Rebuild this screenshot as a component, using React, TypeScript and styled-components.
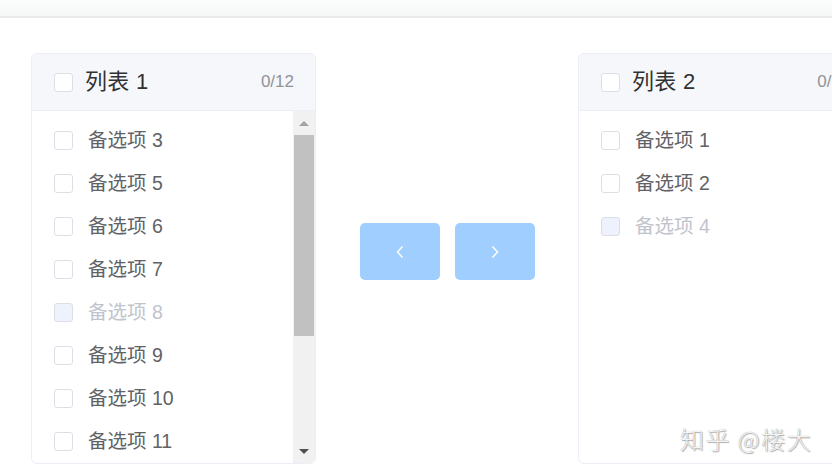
import React from "react";
import styled, { createGlobalStyle } from "styled-components";

const Global = createGlobalStyle`
  html, body { margin: 0; padding: 0; background: #fff; }
  body {
    width: 832px; height: 472px; overflow: hidden;
    font-family: "Liberation Sans", "Noto Sans CJK SC", sans-serif;
  }
`;

const Page = styled.div`
  position: relative;
  width: 832px;
  height: 472px;
  overflow: hidden;
  background: #fff;
`;

const TopBand = styled.div`
  height: 16px;
  background: linear-gradient(#fbfcfc, #f6f7f7);
  border-bottom: 2px solid #e7e9ea;
`;

const Transfer = styled.div`
  display: flex;
  align-items: flex-start;
  padding: 35px 0 0 31px;
`;

const Panel = styled.div`
  flex: 0 0 285px;
  width: 285px;
  height: 411px;
  box-sizing: border-box;
  border: 1px solid #ebeef5;
  border-radius: 6px;
  background: #fff;
  overflow: hidden;
  display: flex;
  flex-direction: column;
`;

const Header = styled.div`
  height: 57px;
  flex: 0 0 57px;
  box-sizing: border-box;
  background: #f5f7fa;
  border-bottom: 1px solid #ebeef5;
  display: flex;
  align-items: center;
  padding: 0 21px 0 22px;
`;

const Title = styled.span`
  font-size: 22px;
  line-height: 26px;
  color: #303133;
  margin: 0 0 1px 12px;
  flex: 1;
  letter-spacing: 0.3px;
`;

const Count = styled.span`
  font-size: 17px;
  line-height: 20px;
  margin-bottom: 1px;
  color: #909399;
`;

const Box = styled.span<{ $disabled?: boolean }>`
  width: 19px;
  height: 19px;
  flex: 0 0 19px;
  box-sizing: border-box;
  border: 1px solid #dcdfe6;
  border-radius: 3px;
  background: ${(p) => (p.$disabled ? "#edf2fc" : "#fff")};
`;

const Body = styled.div`
  flex: 1;
  display: flex;
  min-height: 0;
`;

const List = styled.div`
  flex: 1;
  padding-top: 8px;
  overflow: hidden;
`;

const Item = styled.div<{ $disabled?: boolean }>`
  height: 43px;
  display: flex;
  align-items: center;
  padding-left: 22px;
  font-size: 19.5px;
  color: ${(p) => (p.$disabled ? "#c0c4cc" : "#606266")};
`;

const ItemLabel = styled.span`
  margin: 0 0 1px 15px;
  line-height: 24px;
`;

const Scrollbar = styled.div`
  flex: 0 0 22px;
  background: #f1f1f1;
  display: flex;
  flex-direction: column;
  align-items: center;
`;

const Arrow = styled.div<{ $down?: boolean; $color: string }>`
  flex: 0 0 24px;
  display: flex;
  align-items: center;
  justify-content: center;
  &::after {
    content: "";
    width: 0;
    height: 0;
    border-left: 5px solid transparent;
    border-right: 5px solid transparent;
    ${(p) =>
      p.$down
        ? `border-top: 5px solid ${p.$color};`
        : `border-bottom: 5px solid ${p.$color};`}
  }
`;

const Thumb = styled.div`
  width: 20px;
  height: 201px;
  background: #c1c1c1;
`;

const Spacer = styled.div`
  flex: 1;
`;

const Buttons = styled.div`
  flex: 0 0 auto;
  display: flex;
  gap: 15px;
  padding: 0 43px 0 44px;
  margin-top: 170px;
`;

const Button = styled.button`
  width: 80px;
  height: 57px;
  border: none;
  border-radius: 5px;
  background: #a0cfff;
  display: flex;
  align-items: center;
  justify-content: center;
  padding: 0;
  cursor: not-allowed;
`;

const Watermark = styled.div`
  position: absolute;
  left: 680px;
  top: 421px;
  font-family: "Noto Sans CJK SC", sans-serif;
  font-weight: 300;
  font-size: 24px;
  color: #f4f4f4;
  letter-spacing: 1.5px;
  text-shadow: 0 0 1px #8a8a8a, 1px 1px 1px #b0b0b0;
  white-space: pre;
`;

type Opt = { label: string; disabled?: boolean };

const left: Opt[] = [
  { label: "备选项 3" },
  { label: "备选项 5" },
  { label: "备选项 6" },
  { label: "备选项 7" },
  { label: "备选项 8", disabled: true },
  { label: "备选项 9" },
  { label: "备选项 10" },
  { label: "备选项 11" },
  { label: "备选项 12" },
  { label: "备选项 13" },
  { label: "备选项 14" },
  { label: "备选项 15" },
];

const right: Opt[] = [
  { label: "备选项 1" },
  { label: "备选项 2" },
  { label: "备选项 4", disabled: true },
];

const Chevron = ({ dir }: { dir: "left" | "right" }) => (
  <svg width="10" height="14" viewBox="0 0 10 14">
    <polyline
      points={dir === "left" ? "7.5,1.5 2.5,7 7.5,12.5" : "2.5,1.5 7.5,7 2.5,12.5"}
      fill="none"
      stroke="#fff"
      strokeWidth="1.4"
    />
  </svg>
);

const TransferPanel = ({
  title,
  count,
  items,
  scroll,
}: {
  title: string;
  count: string;
  items: Opt[];
  scroll?: boolean;
}) => (
  <Panel>
    <Header>
      <Box />
      <Title>{title}</Title>
      <Count>{count}</Count>
    </Header>
    <Body>
      <List>
        {items.map((o) => (
          <Item key={o.label} $disabled={o.disabled}>
            <Box $disabled={o.disabled} />
            <ItemLabel>{o.label}</ItemLabel>
          </Item>
        ))}
      </List>
      {scroll && (
        <Scrollbar>
          <Arrow $color="#a3a3a3" />
          <Thumb />
          <Spacer />
          <Arrow $down $color="#505050" />
        </Scrollbar>
      )}
    </Body>
  </Panel>
);

export default function App() {
  return (
    <Page>
      <Global />
      <TopBand />
      <Transfer>
        <TransferPanel title="列表 1" count="0/12" items={left} scroll />
        <Buttons>
          <Button aria-label="left">
            <Chevron dir="left" />
          </Button>
          <Button aria-label="right">
            <Chevron dir="right" />
          </Button>
        </Buttons>
        <TransferPanel title="列表 2" count="0/3" items={right} />
      </Transfer>
      <Watermark>知乎 @楼大</Watermark>
    </Page>
  );
}
